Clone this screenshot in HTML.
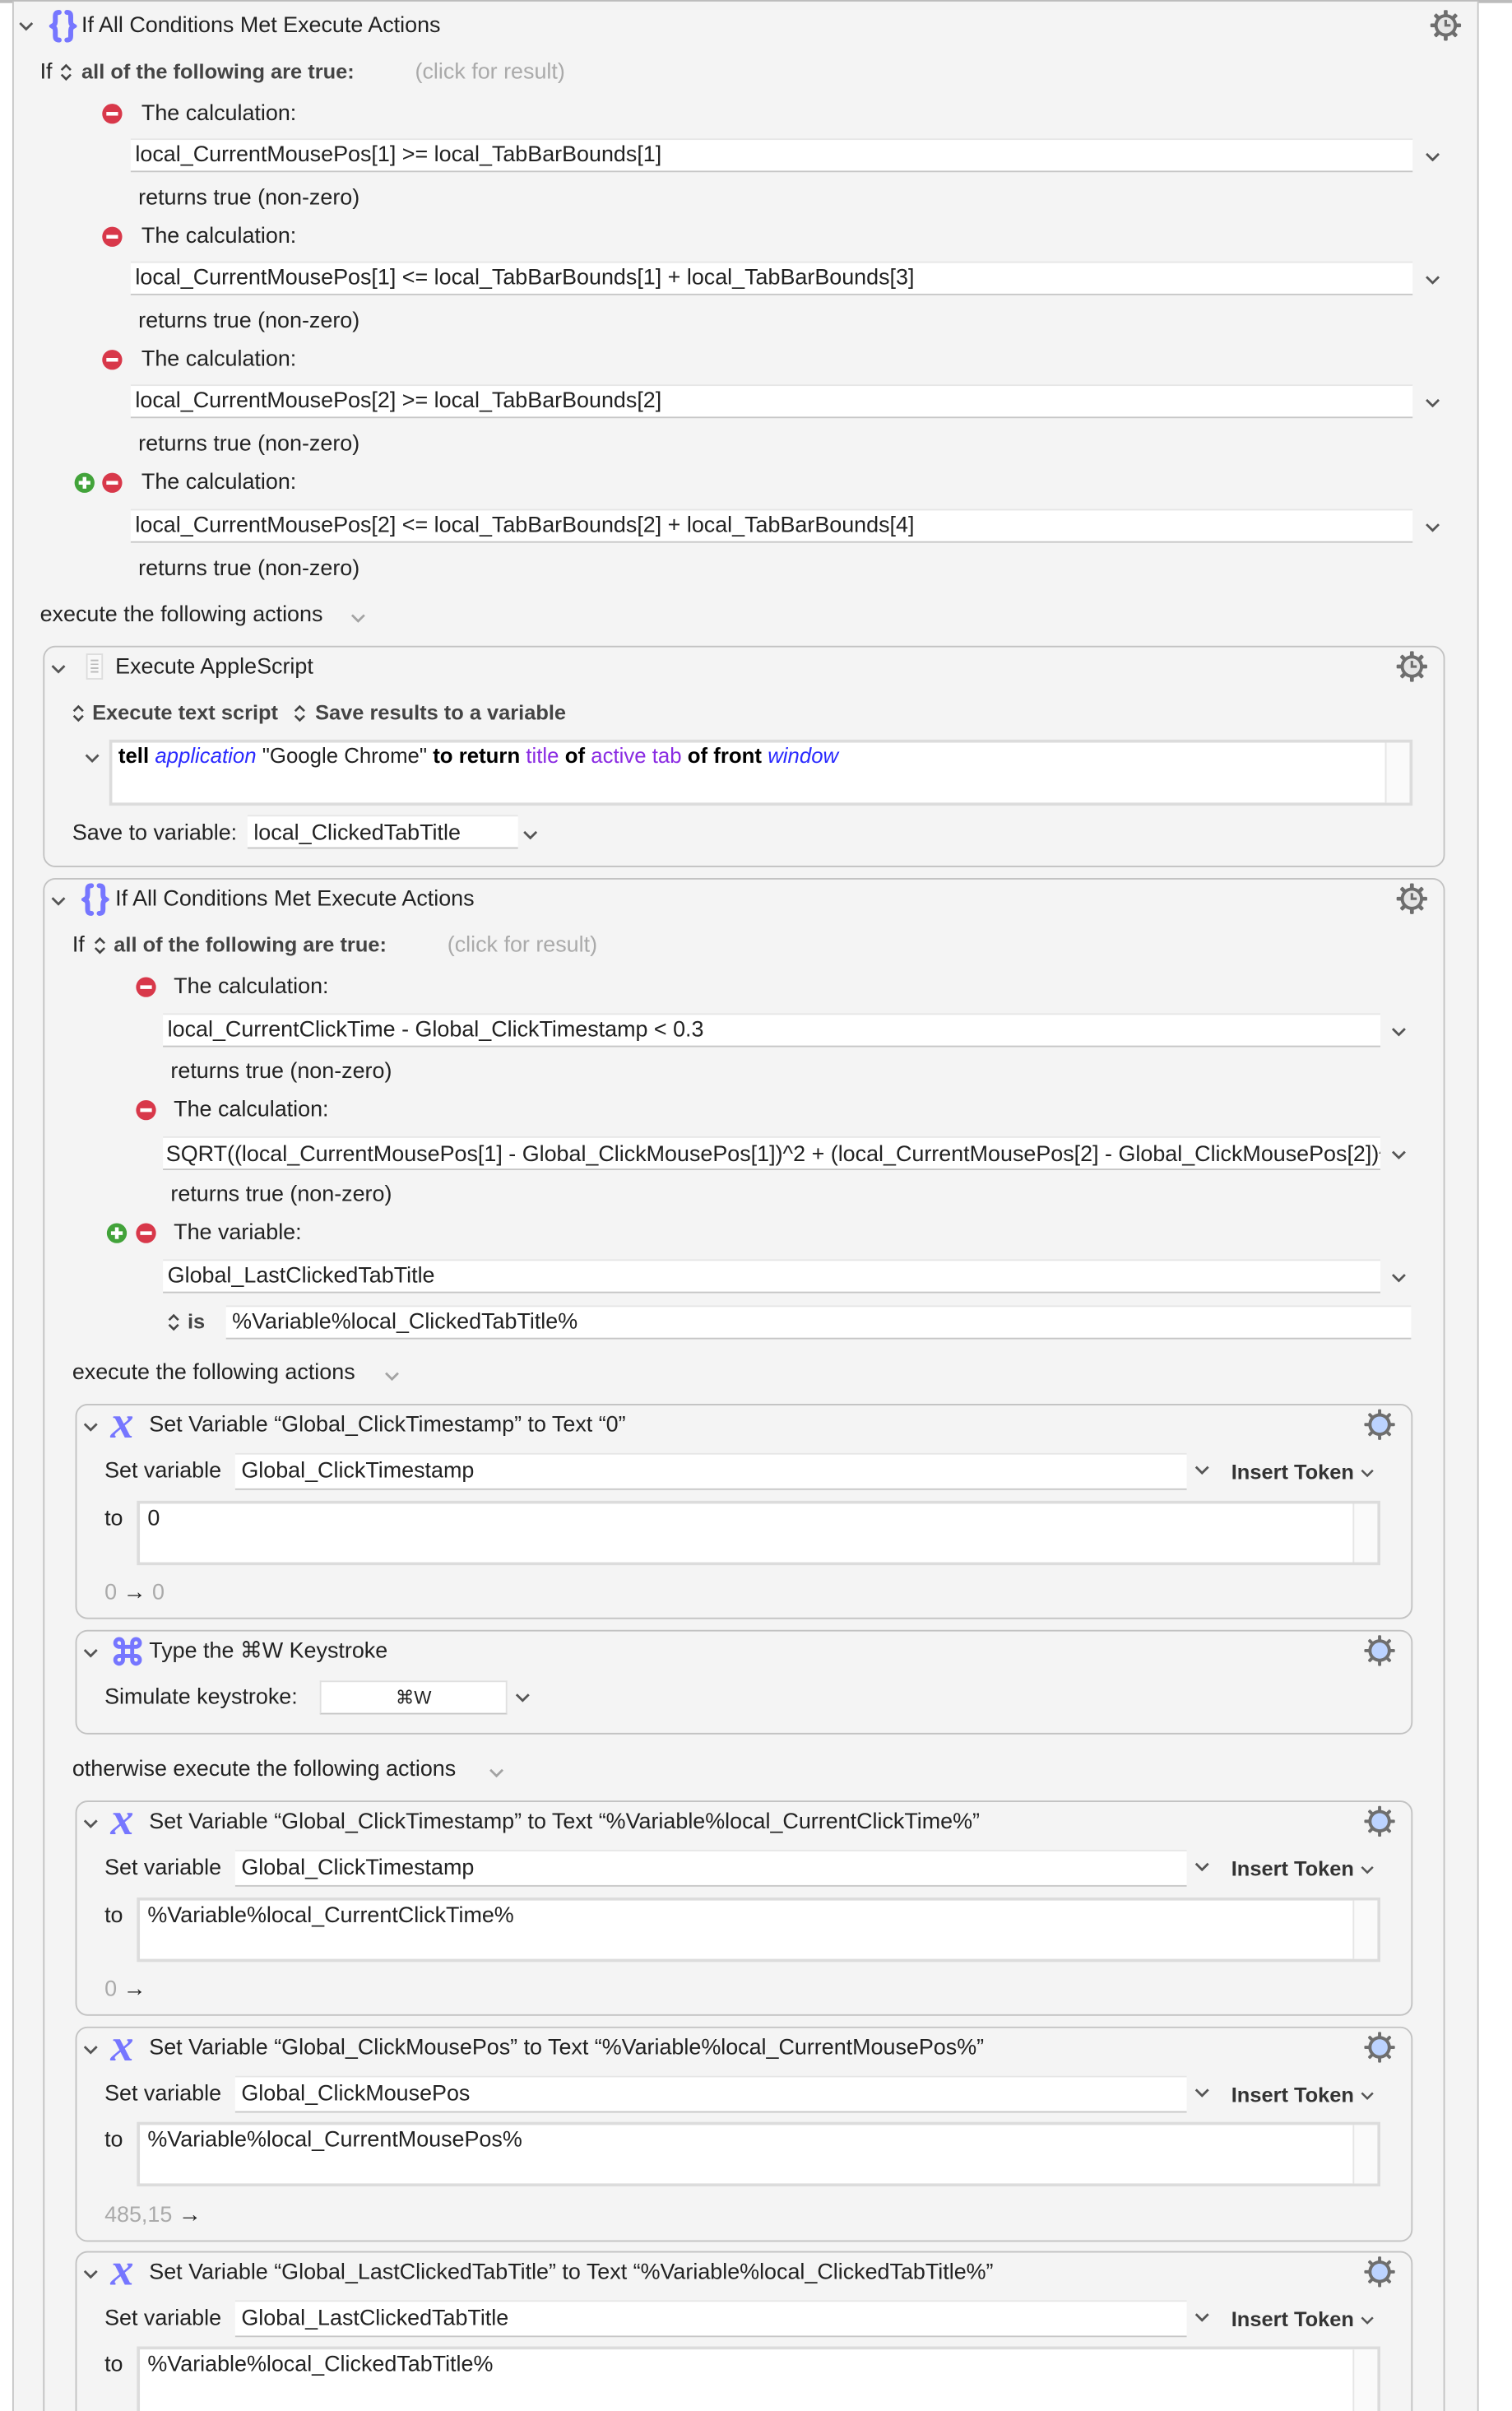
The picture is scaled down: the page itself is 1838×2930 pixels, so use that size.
<!DOCTYPE html>
<html><head><meta charset="utf-8">
<style>
html,body{margin:0;padding:0;background:#fff;width:1838px;height:2930px;overflow:hidden}
#c{position:absolute;left:0;top:0;width:984px;height:1568px;transform:scale(1.8686);transform-origin:0 0;overflow:hidden;background:#fff}
.t{position:absolute;font-family:"Liberation Sans",sans-serif;font-size:14.4px;line-height:16px;color:#222;white-space:nowrap}
.b{font-weight:bold;color:#444;font-size:13.6px}
.g{color:#aaa}
.ar{color:#222;font-weight:bold;font-size:15px}
.x{font-family:'Liberation Serif',serif;font-style:italic;font-weight:bold;font-size:30px;line-height:26px;color:#7676ff}
.f{position:absolute;background:#fff;border-top:1px solid #e6e6e6;border-bottom:1px solid #c6c6c6;box-sizing:border-box}
.ta{position:absolute;background:#fff;border:2px solid #dcdcdc;box-sizing:border-box}
.ta:after{content:"";position:absolute;right:0;top:0;bottom:0;width:15px;border-left:1px solid #e6e6e6;background:#fafafa}
.box{position:absolute;border:1.5px solid #c2c2c2;border-radius:8px;background:#f4f4f4;box-sizing:border-box}
.ic{position:absolute}
</style></head><body><div id="c">
<svg width="0" height="0" style="position:absolute">
<defs>
<symbol id="chev" viewBox="0 0 10 6"><path d="M1 1l4 4 4-4" stroke="#555" stroke-width="1.5" fill="none"/></symbol>
<symbol id="ud" viewBox="0 0 8 12"><path d="M1 4.5l3-3 3 3M1 7.5l3 3 3-3" stroke="#444" stroke-width="1.4" fill="none"/></symbol>
<symbol id="gear" viewBox="0 0 20 20"><g fill="#6e6e6e"><circle cx="10" cy="10" r="7"/><rect x="8.8" y="0.5" width="2.4" height="19" rx="0.6"/><rect x="8.8" y="0.5" width="2.4" height="19" rx="0.6" transform="rotate(45 10 10)"/><rect x="8.8" y="0.5" width="2.4" height="19" rx="0.6" transform="rotate(90 10 10)"/><rect x="8.8" y="0.5" width="2.4" height="19" rx="0.6" transform="rotate(135 10 10)"/></g><circle cx="10" cy="10" r="5" fill="#e6e6e6"/><path d="M10 6.5V10h3" stroke="#6e6e6e" stroke-width="1.6" fill="none"/></symbol>
<symbol id="gearb" viewBox="0 0 20 20"><g fill="#6e6e6e"><circle cx="10" cy="10" r="7"/><rect x="9" y="0.5" width="2" height="19" rx="0.6"/><rect x="9" y="0.5" width="2" height="19" rx="0.6" transform="rotate(45 10 10)"/><rect x="9" y="0.5" width="2" height="19" rx="0.6" transform="rotate(90 10 10)"/><rect x="9" y="0.5" width="2" height="19" rx="0.6" transform="rotate(135 10 10)"/></g><circle cx="10" cy="10" r="5" fill="#bcd3ff"/></symbol>
<symbol id="minus" viewBox="0 0 14 14"><circle cx="7" cy="7" r="6.5" fill="#d8384a"/><rect x="3.2" y="5.8" width="7.6" height="2.4" fill="#fff"/></symbol>
<symbol id="plus" viewBox="0 0 14 14"><circle cx="7" cy="7" r="6.5" fill="#42a33a"/><rect x="3.2" y="5.8" width="7.6" height="2.4" fill="#fff"/><rect x="5.8" y="3.2" width="2.4" height="7.6" fill="#fff"/></symbol>
<symbol id="brace" viewBox="0 0 18 22"><path d="M6.5 2C3.5 2 4 4 4 7S3.5 10 2 11C3.5 12 4 12 4 15S3.5 20 6.5 20M11.5 2c3 0 2.5 2 2.5 5s.5 3 2 4c-1.5 1-2 1-2 4s.5 5-2.5 5" stroke="#7676ff" stroke-width="3.2" fill="none" stroke-linecap="round"/></symbol>
<symbol id="cmd" viewBox="0 0 20 20"><path d="M7 7V4.5A2.5 2.5 0 1 0 4.5 7H15.5A2.5 2.5 0 1 0 13 4.5V15.5A2.5 2.5 0 1 0 15.5 13H4.5A2.5 2.5 0 1 0 7 15.5Z" stroke="#7676ff" stroke-width="2.6" fill="none"/></symbol>
</defs></svg>

<div style="position:absolute;left:0;top:0;width:984px;height:2px;background:#bcbcbc"></div>
<div class="box" style="left:8px;top:1px;width:954px;height:1580px;border-top:none;border-radius:0;border-color:#c6c6c6"></div>

<svg class="ic" style="left:12px;top:14px" width="10" height="6"><use href="#chev"/></svg>
<svg class="ic" style="left:32px;top:6px" width="18" height="22"><use href="#brace"/></svg>
<div class="t" style="left:53px;top:9px">If All Conditions Met Execute Actions</div>
<svg class="ic" style="left:930px;top:6px" width="21" height="21"><use href="#gear"/></svg>

<div class="t" style="left:26px;top:39px">If</div>
<svg class="ic" style="left:39px;top:41px" width="8" height="12"><use href="#ud"/></svg>
<div class="t b" style="left:53px;top:39px">all of the following are true:</div>
<div class="t g" style="left:270px;top:39px">(click for result)</div>

<svg class="ic" style="left:66px;top:67px" width="14" height="14"><use href="#minus"/></svg>
<div class="t" style="left:92px;top:66px">The calculation:</div>
<div class="f" style="left:85px;top:90px;width:834px;height:22px"></div>
<div class="t" style="left:88px;top:93px">local_CurrentMousePos[1] &gt;= local_TabBarBounds[1]</div>
<svg class="ic" style="left:927px;top:99px" width="10" height="6"><use href="#chev"/></svg>
<div class="t" style="left:90px;top:121px">returns true (non-zero)</div>

<svg class="ic" style="left:66px;top:147px" width="14" height="14"><use href="#minus"/></svg>
<div class="t" style="left:92px;top:146px">The calculation:</div>
<div class="f" style="left:85px;top:170px;width:834px;height:22px"></div>
<div class="t" style="left:88px;top:173px">local_CurrentMousePos[1] &lt;= local_TabBarBounds[1] + local_TabBarBounds[3]</div>
<svg class="ic" style="left:927px;top:179px" width="10" height="6"><use href="#chev"/></svg>
<div class="t" style="left:90px;top:201px">returns true (non-zero)</div>

<svg class="ic" style="left:66px;top:227px" width="14" height="14"><use href="#minus"/></svg>
<div class="t" style="left:92px;top:226px">The calculation:</div>
<div class="f" style="left:85px;top:250px;width:834px;height:22px"></div>
<div class="t" style="left:88px;top:253px">local_CurrentMousePos[2] &gt;= local_TabBarBounds[2]</div>
<svg class="ic" style="left:927px;top:259px" width="10" height="6"><use href="#chev"/></svg>
<div class="t" style="left:90px;top:281px">returns true (non-zero)</div>

<svg class="ic" style="left:48px;top:307px" width="14" height="14"><use href="#plus"/></svg>
<svg class="ic" style="left:66px;top:307px" width="14" height="14"><use href="#minus"/></svg>
<div class="t" style="left:92px;top:306px">The calculation:</div>
<div class="f" style="left:85px;top:331px;width:834px;height:22px"></div>
<div class="t" style="left:88px;top:334px">local_CurrentMousePos[2] &lt;= local_TabBarBounds[2] + local_TabBarBounds[4]</div>
<svg class="ic" style="left:927px;top:340px" width="10" height="6"><use href="#chev"/></svg>
<div class="t" style="left:90px;top:362px">returns true (non-zero)</div>

<div class="t" style="left:26px;top:392px">execute the following actions</div>
<svg class="ic" style="left:228px;top:399px" width="10" height="6" opacity="0.5"><use href="#chev"/></svg>

<div class="box" style="left:28px;top:420px;width:912px;height:144px"></div>
<svg class="ic" style="left:33px;top:432px" width="10" height="6"><use href="#chev"/></svg>
<div class="ic" style="left:56px;top:425px;width:11px;height:17px;background:#f8f8f8;border:1px solid #ddd;box-sizing:border-box"><div style="margin:3px 2px;height:9px;background:repeating-linear-gradient(#bbb 0 1px,transparent 1px 2.5px)"></div></div>
<div class="t" style="left:75px;top:426px">Execute AppleScript</div>
<svg class="ic" style="left:908px;top:423px" width="21" height="21"><use href="#gear"/></svg>

<svg class="ic" style="left:47px;top:458px" width="8" height="12"><use href="#ud"/></svg>
<div class="t b" style="left:60px;top:456px">Execute text script</div>
<svg class="ic" style="left:191px;top:458px" width="8" height="12"><use href="#ud"/></svg>
<div class="t b" style="left:205px;top:456px">Save results to a variable</div>

<div class="ta" style="left:71px;top:481px;width:848px;height:43px"></div>
<svg class="ic" style="left:55px;top:490px" width="10" height="6"><use href="#chev"/></svg>
<div class="t" style="left:77px;top:484px;font-size:13.8px"><b style="color:#000">tell</b> <i style="color:#2a2aff">application</i> "Google Chrome" <b style="color:#000">to return</b> <span style="color:#8a2be2">title</span> <b style="color:#000">of</b> <span style="color:#8a2be2">active tab</span> <b style="color:#000">of front</b> <i style="color:#2a2aff">window</i></div>

<div class="t" style="left:47px;top:534px">Save to variable:</div>
<div class="f" style="left:161px;top:530px;width:176px;height:22px"></div>
<div class="t" style="left:165px;top:534px">local_ClickedTabTitle</div>
<svg class="ic" style="left:340px;top:540px" width="10" height="6"><use href="#chev"/></svg>

<div class="box" style="left:28px;top:571px;width:912px;height:1010px"></div>
<svg class="ic" style="left:33px;top:583px" width="10" height="6"><use href="#chev"/></svg>
<svg class="ic" style="left:53px;top:574px" width="18" height="22"><use href="#brace"/></svg>
<div class="t" style="left:75px;top:577px">If All Conditions Met Execute Actions</div>
<svg class="ic" style="left:908px;top:574px" width="21" height="21"><use href="#gear"/></svg>

<div class="t" style="left:47px;top:607px">If</div>
<svg class="ic" style="left:61px;top:609px" width="8" height="12"><use href="#ud"/></svg>
<div class="t b" style="left:74px;top:607px">all of the following are true:</div>
<div class="t g" style="left:291px;top:607px">(click for result)</div>

<svg class="ic" style="left:88px;top:635px" width="14" height="14"><use href="#minus"/></svg>
<div class="t" style="left:113px;top:634px">The calculation:</div>
<div class="f" style="left:106px;top:659px;width:792px;height:22px"></div>
<div class="t" style="left:109px;top:662px">local_CurrentClickTime - Global_ClickTimestamp &lt; 0.3</div>
<svg class="ic" style="left:905px;top:668px" width="10" height="6"><use href="#chev"/></svg>
<div class="t" style="left:111px;top:689px">returns true (non-zero)</div>

<svg class="ic" style="left:88px;top:715px" width="14" height="14"><use href="#minus"/></svg>
<div class="t" style="left:113px;top:714px">The calculation:</div>
<div class="f" style="left:106px;top:739px;width:792px;height:22px;overflow:hidden"><div class="t" style="left:2px;top:3px">SQRT((local_CurrentMousePos[1] - Global_ClickMousePos[1])^2 + (local_CurrentMousePos[2] - Global_ClickMousePos[2])^2)</div></div>
<svg class="ic" style="left:905px;top:748px" width="10" height="6"><use href="#chev"/></svg>
<div class="t" style="left:111px;top:769px">returns true (non-zero)</div>

<svg class="ic" style="left:69px;top:795px" width="14" height="14"><use href="#plus"/></svg>
<svg class="ic" style="left:88px;top:795px" width="14" height="14"><use href="#minus"/></svg>
<div class="t" style="left:113px;top:794px">The variable:</div>
<div class="f" style="left:106px;top:819px;width:792px;height:22px"></div>
<div class="t" style="left:109px;top:822px">Global_LastClickedTabTitle</div>
<svg class="ic" style="left:905px;top:828px" width="10" height="6"><use href="#chev"/></svg>
<svg class="ic" style="left:109px;top:854px" width="8" height="12"><use href="#ud"/></svg>
<div class="t b" style="left:122px;top:852px">is</div>
<div class="f" style="left:147px;top:849px;width:771px;height:22px"></div>
<div class="t" style="left:151px;top:852px">%Variable%local_ClickedTabTitle%</div>

<div class="t" style="left:47px;top:885px">execute the following actions</div>
<svg class="ic" style="left:250px;top:892px" width="10" height="6" opacity="0.5"><use href="#chev"/></svg>

<div class="box" style="left:49px;top:913px;width:870px;height:140px"></div>
<svg class="ic" style="left:54px;top:925px" width="10" height="6"><use href="#chev"/></svg>
<div class="t x" style="left:72px;top:913px">x</div>
<div class="t" style="left:97px;top:919px">Set Variable “Global_ClickTimestamp” to Text “0”</div>
<svg class="ic" style="left:887px;top:916px" width="21" height="21"><use href="#gearb"/></svg>
<div class="t" style="left:68px;top:949px">Set variable</div>
<div class="f" style="left:153px;top:945px;width:619px;height:24px"></div>
<div class="t" style="left:157px;top:949px">Global_ClickTimestamp</div>
<svg class="ic" style="left:777px;top:953px" width="10" height="6"><use href="#chev"/></svg>
<div class="t b" style="left:801px;top:950px;color:#333">Insert Token</div>
<svg class="ic" style="left:885px;top:955px" width="9" height="6"><use href="#chev"/></svg>
<div class="t" style="left:68px;top:980px">to</div>
<div class="ta" style="left:89px;top:976px;width:809px;height:42px"></div>
<div class="t" style="left:96px;top:980px">0</div>
<div class="t g" style="left:68px;top:1028px">0 <span class="ar">→</span> 0</div>

<div class="box" style="left:49px;top:1060px;width:870px;height:68px"></div>
<svg class="ic" style="left:54px;top:1072px" width="10" height="6"><use href="#chev"/></svg>
<svg class="ic" style="left:73px;top:1064px" width="20" height="20"><use href="#cmd"/></svg>
<div class="t" style="left:97px;top:1066px">Type the ⌘W Keystroke</div>
<svg class="ic" style="left:887px;top:1063px" width="21" height="21"><use href="#gearb"/></svg>
<div class="t" style="left:68px;top:1096px">Simulate keystroke:</div>
<div class="f" style="left:208px;top:1093px;width:122px;height:22px;border:1px solid #e0e0e0;border-bottom-color:#c6c6c6"></div>
<div class="t" style="left:208px;top:1096px;width:122px;text-align:center;font-size:12px">⌘W</div>
<svg class="ic" style="left:335px;top:1101px" width="10" height="6"><use href="#chev"/></svg>

<div class="t" style="left:47px;top:1143px">otherwise execute the following actions</div>
<svg class="ic" style="left:318px;top:1150px" width="10" height="6" opacity="0.5"><use href="#chev"/></svg>

<div class="box" style="left:49px;top:1171px;width:870px;height:140px"></div>
<svg class="ic" style="left:54px;top:1183px" width="10" height="6"><use href="#chev"/></svg>
<div class="t x" style="left:72px;top:1171px">x</div>
<div class="t" style="left:97px;top:1177px">Set Variable “Global_ClickTimestamp” to Text “%Variable%local_CurrentClickTime%”</div>
<svg class="ic" style="left:887px;top:1174px" width="21" height="21"><use href="#gearb"/></svg>
<div class="t" style="left:68px;top:1207px">Set variable</div>
<div class="f" style="left:153px;top:1203px;width:619px;height:24px"></div>
<div class="t" style="left:157px;top:1207px">Global_ClickTimestamp</div>
<svg class="ic" style="left:777px;top:1211px" width="10" height="6"><use href="#chev"/></svg>
<div class="t b" style="left:801px;top:1208px;color:#333">Insert Token</div>
<svg class="ic" style="left:885px;top:1213px" width="9" height="6"><use href="#chev"/></svg>
<div class="t" style="left:68px;top:1238px">to</div>
<div class="ta" style="left:89px;top:1234px;width:809px;height:42px"></div>
<div class="t" style="left:96px;top:1238px">%Variable%local_CurrentClickTime%</div>
<div class="t g" style="left:68px;top:1286px">0 <span class="ar">→</span></div>

<div class="box" style="left:49px;top:1318px;width:870px;height:140px"></div>
<svg class="ic" style="left:54px;top:1330px" width="10" height="6"><use href="#chev"/></svg>
<div class="t x" style="left:72px;top:1318px">x</div>
<div class="t" style="left:97px;top:1324px">Set Variable “Global_ClickMousePos” to Text “%Variable%local_CurrentMousePos%”</div>
<svg class="ic" style="left:887px;top:1321px" width="21" height="21"><use href="#gearb"/></svg>
<div class="t" style="left:68px;top:1354px">Set variable</div>
<div class="f" style="left:153px;top:1350px;width:619px;height:24px"></div>
<div class="t" style="left:157px;top:1354px">Global_ClickMousePos</div>
<svg class="ic" style="left:777px;top:1358px" width="10" height="6"><use href="#chev"/></svg>
<div class="t b" style="left:801px;top:1355px;color:#333">Insert Token</div>
<svg class="ic" style="left:885px;top:1360px" width="9" height="6"><use href="#chev"/></svg>
<div class="t" style="left:68px;top:1384px">to</div>
<div class="ta" style="left:89px;top:1380px;width:809px;height:42px"></div>
<div class="t" style="left:96px;top:1384px">%Variable%local_CurrentMousePos%</div>
<div class="t g" style="left:68px;top:1433px">485,15 <span class="ar">→</span></div>

<div class="box" style="left:49px;top:1464px;width:870px;height:140px"></div>
<svg class="ic" style="left:54px;top:1476px" width="10" height="6"><use href="#chev"/></svg>
<div class="t x" style="left:72px;top:1464px">x</div>
<div class="t" style="left:97px;top:1470px">Set Variable “Global_LastClickedTabTitle” to Text “%Variable%local_ClickedTabTitle%”</div>
<svg class="ic" style="left:887px;top:1467px" width="21" height="21"><use href="#gearb"/></svg>
<div class="t" style="left:68px;top:1500px">Set variable</div>
<div class="f" style="left:153px;top:1496px;width:619px;height:24px"></div>
<div class="t" style="left:157px;top:1500px">Global_LastClickedTabTitle</div>
<svg class="ic" style="left:777px;top:1504px" width="10" height="6"><use href="#chev"/></svg>
<div class="t b" style="left:801px;top:1501px;color:#333">Insert Token</div>
<svg class="ic" style="left:885px;top:1506px" width="9" height="6"><use href="#chev"/></svg>
<div class="t" style="left:68px;top:1530px">to</div>
<div class="ta" style="left:89px;top:1526px;width:809px;height:60px"></div>
<div class="t" style="left:96px;top:1530px">%Variable%local_ClickedTabTitle%</div>
</div></body></html>
